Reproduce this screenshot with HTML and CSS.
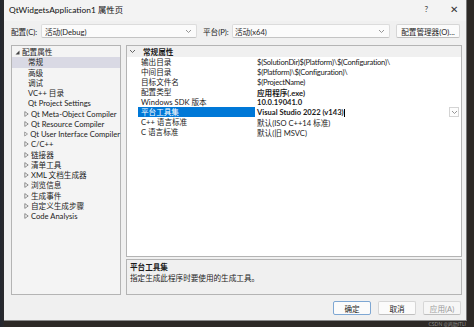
FILE: index.html
```html
<!DOCTYPE html>
<html>
<head>
<meta charset="utf-8">
<link rel="stylesheet" href="styles.css">
</head>
<body>
<div class="screen">
  <div class="dialog">
    <div class="titlebar">
      <span class="title">QtWidgetsApplication1 属性页</span>
      <span class="tb-btns"><span class="help">?</span><span class="close">✕</span></span>
    </div>
    <div class="toolbar">
      <span class="lbl">配置(C):</span>
      <div class="combo combo-config"><span>活动(Debug)</span><svg class="chev" width="7" height="5" viewBox="0 0 7 5"><polyline points="1,1 3.5,3.5 6,1" fill="none" stroke="#8a8a8a" stroke-width="0.9"/></svg></div>
      <span class="lbl lbl2">平台(P):</span>
      <div class="combo combo-platform"><span>活动(x64)</span><svg class="chev" width="7" height="5" viewBox="0 0 7 5"><polyline points="1,1 3.5,3.5 6,1" fill="none" stroke="#8a8a8a" stroke-width="0.9"/></svg></div>
      <div class="btn btn-mgr">配置管理器(O)...</div>
    </div>
    <div class="main">
      <div class="tree">
        <div class="ti root"><svg class="tri" width="5" height="5" viewBox="0 0 5 5"><polygon points="4.5,0.5 4.5,4.5 0.5,4.5" fill="#444"/></svg><span>配置属性</span></div>
        <div class="ti leaf sel"><span>常规</span></div>
        <div class="ti leaf"><span>高级</span></div>
        <div class="ti leaf"><span>调试</span></div>
        <div class="ti leaf"><span>VC++ 目录</span></div>
        <div class="ti leaf"><span>Qt Project Settings</span></div>
        <div class="ti coll"><svg class="tri" width="5" height="6" viewBox="0 0 5 6"><polygon points="0.8,0.6 4.2,3 0.8,5.4" fill="none" stroke="#777" stroke-width="0.8"/></svg><span>Qt Meta-Object Compiler</span></div>
        <div class="ti coll"><svg class="tri" width="5" height="6" viewBox="0 0 5 6"><polygon points="0.8,0.6 4.2,3 0.8,5.4" fill="none" stroke="#777" stroke-width="0.8"/></svg><span>Qt Resource Compiler</span></div>
        <div class="ti coll"><svg class="tri" width="5" height="6" viewBox="0 0 5 6"><polygon points="0.8,0.6 4.2,3 0.8,5.4" fill="none" stroke="#777" stroke-width="0.8"/></svg><span>Qt User Interface Compiler</span></div>
        <div class="ti coll"><svg class="tri" width="5" height="6" viewBox="0 0 5 6"><polygon points="0.8,0.6 4.2,3 0.8,5.4" fill="none" stroke="#777" stroke-width="0.8"/></svg><span>C/C++</span></div>
        <div class="ti coll"><svg class="tri" width="5" height="6" viewBox="0 0 5 6"><polygon points="0.8,0.6 4.2,3 0.8,5.4" fill="none" stroke="#777" stroke-width="0.8"/></svg><span>链接器</span></div>
        <div class="ti coll"><svg class="tri" width="5" height="6" viewBox="0 0 5 6"><polygon points="0.8,0.6 4.2,3 0.8,5.4" fill="none" stroke="#777" stroke-width="0.8"/></svg><span>清单工具</span></div>
        <div class="ti coll"><svg class="tri" width="5" height="6" viewBox="0 0 5 6"><polygon points="0.8,0.6 4.2,3 0.8,5.4" fill="none" stroke="#777" stroke-width="0.8"/></svg><span>XML 文档生成器</span></div>
        <div class="ti coll"><svg class="tri" width="5" height="6" viewBox="0 0 5 6"><polygon points="0.8,0.6 4.2,3 0.8,5.4" fill="none" stroke="#777" stroke-width="0.8"/></svg><span>浏览信息</span></div>
        <div class="ti coll"><svg class="tri" width="5" height="6" viewBox="0 0 5 6"><polygon points="0.8,0.6 4.2,3 0.8,5.4" fill="none" stroke="#777" stroke-width="0.8"/></svg><span>生成事件</span></div>
        <div class="ti coll"><svg class="tri" width="5" height="6" viewBox="0 0 5 6"><polygon points="0.8,0.6 4.2,3 0.8,5.4" fill="none" stroke="#777" stroke-width="0.8"/></svg><span>自定义生成步骤</span></div>
        <div class="ti coll"><svg class="tri" width="5" height="6" viewBox="0 0 5 6"><polygon points="0.8,0.6 4.2,3 0.8,5.4" fill="none" stroke="#777" stroke-width="0.8"/></svg><span>Code Analysis</span></div>
      </div>
      <div class="right">
        <div class="grid">
          <div class="ghead"><svg class="gchev" width="7" height="5" viewBox="0 0 7 5"><polyline points="1,1 3.5,3.5 6,1" fill="none" stroke="#555" stroke-width="0.9"/></svg><span>常规属性</span></div>
          <div class="row"><span class="name">输出目录</span><span class="val path">$(SolutionDir)$(Platform)\$(Configuration)\</span></div>
          <div class="row"><span class="name">中间目录</span><span class="val path">$(Platform)\$(Configuration)\</span></div>
          <div class="row"><span class="name">目标文件名</span><span class="val path">$(ProjectName)</span></div>
          <div class="row"><span class="name">配置类型</span><span class="val b">应用程序(.exe)</span></div>
          <div class="row"><span class="name">Windows SDK 版本</span><span class="val b">10.0.19041.0</span></div>
          <div class="row selrow"><span class="name">平台工具集</span><span class="val b">Visual Studio 2022 (v143)<i class="caret"></i></span><span class="ddbtn"><svg width="7" height="5" viewBox="0 0 7 5"><polyline points="1,1 3.5,3.5 6,1" fill="none" stroke="#8a8a8a" stroke-width="0.9"/></svg></span></div>
          <div class="row"><span class="name">C++ 语言标准</span><span class="val">默认(ISO C++14 标准)</span></div>
          <div class="row"><span class="name">C 语言标准</span><span class="val">默认(旧 MSVC)</span></div>
        </div>
        <div class="desc">
          <div class="dtitle">平台工具集</div>
          <div class="dtext">指定生成此程序时要使用的生成工具。</div>
        </div>
      </div>
    </div>
    <div class="footer">
      <div class="btn fbtn ok">确定</div>
      <div class="btn fbtn">取消</div>
      <div class="btn fbtn dis">应用(A)</div>
    </div>
  </div>
  <div class="watermark">CSDN @鸡肋ITLI</div>
</div>
</body>
</html>
```

FILE: styles.css
```css
* { box-sizing: border-box; }
html, body { margin: 0; padding: 0; }
body {
  width: 474px;
  height: 327px;
  overflow: hidden;
  background: #2d2926;
  font-family: Lato, "Noto Sans CJK SC", sans-serif;
  font-size: 7.6px;
  color: #1b1b1b;
}
.screen {
  position: relative;
  width: 474px;
  height: 327px;
  background: linear-gradient(90deg, #23272f 0, #2a2a2c 4px, #2d2926 4px);
  padding-left: 4px;
}
.dialog {
  width: 463px;
  height: 321px;
  background: #f0f0f0;
  border-right: 1px solid #7a7a7a;
  border-bottom: 1px solid #8a8a8a;
  display: flex;
  flex-direction: column;
}
.titlebar {
  height: 21px;
  display: flex;
  align-items: center;
  justify-content: space-between;
  padding: 0 8px 3px 5px;
  background: #f3f3f3;
  font-size: 8.4px;
  color: #111;
}
.tb-btns { display: flex; align-items: center; gap: 22px; color: #333; }
.help { font-size: 8px; }
.close { font-size: 10px; }
.toolbar {
  height: 22px;
  display: flex;
  align-items: center;
  padding: 0 6px 2px 7px;
}
.lbl { width: 30px; }
.lbl2 { margin-left: 6px; width: 29px; }
.combo {
  height: 14px;
  background: #fbfbfb;
  border: 1px solid #dcdcdc;
  border-bottom-color: #c4c4c4;
  display: flex;
  align-items: center;
  justify-content: space-between;
  padding: 0 4px 0 3px;
  border-radius: 2px;
}
.combo-config { width: 156px; }
.combo-platform { width: 158px; padding-left: 2px; }
.btn {
  height: 14px;
  background: #fbfbfb;
  border: 1px solid #d6d6d6;
  border-bottom-color: #bfbfbf;
  border-radius: 2px;
  display: flex;
  align-items: center;
  justify-content: center;
}
.btn-mgr { width: 64px; margin-left: auto; }
.main {
  display: flex;
  gap: 5px;
  padding: 2px 4px 0 7px;
  height: 252px;
}
.tree {
  width: 110px;
  height: 250px;
  background: #f4f4f4;
  border: 1px solid #b4b4b4;
  padding-top: 1px;
}
.ti {
  height: 10.25px;
  line-height: 10.25px;
  display: flex;
  align-items: center;
  white-space: nowrap;
}
.ti.root { padding-left: 3px; }
.ti.root .tri { margin-right: 2px; }
.ti.leaf { padding-left: 16px; }
.ti.coll { padding-left: 12px; }
.ti.coll .tri { margin-right: 2px; }
.ti.sel { background: #d9d9e4; }
.right {
  flex: 1;
  display: flex;
  flex-direction: column;
  gap: 2px;
}
.grid {
  height: 212px;
  background: #fff;
  border: 1px solid #b4b4b4;
}
.ghead {
  height: 11px;
  background: #f0f0f0;
  display: flex;
  align-items: center;
  font-weight: bold;
  padding-left: 2px;
}
.gchev { margin-right: 7px; }
.row {
  height: 10px;
  display: flex;
  align-items: center;
  white-space: nowrap;
  position: relative;
  padding-left: 11px;
}
.name { width: 117px; padding-left: 3px; height: 10px; line-height: 10px; }
.val { padding-left: 2px; }
.path { letter-spacing: -0.25px; }
.b { font-weight: bold; }
.selrow .name { background: #0078d7; color: #fff; }
.caret { display: inline-block; width: 1px; height: 8px; background: #000; vertical-align: middle; margin-left: 0.5px; }
.ddbtn {
  margin-left: auto;
  margin-right: 2px;
  width: 10px;
  height: 10px;
  border: 1px solid #d4d4d4;
  display: flex;
  align-items: center;
  justify-content: center;
  background: #fdfdfd;
}
.desc {
  height: 36px;
  border: 1px solid #b4b4b4;
  background: #f0f0f0;
  padding: 2px 3px;
}
.dtitle { font-weight: bold; line-height: 11px; }
.dtext { line-height: 10px; }
.footer {
  flex: 1;
  display: flex;
  justify-content: flex-end;
  align-items: flex-start;
  gap: 7px;
  padding: 6px 5px 0 0;
}
.fbtn { width: 38px; }
.fbtn.ok { border-color: #7ea7d3; }
.fbtn.dis { color: #9a9a9a; background: #f6f6f6; }
.watermark {
  position: absolute;
  right: 8px;
  bottom: 0px;
  font-size: 5px;
  color: #8d8d8d;
}
```
